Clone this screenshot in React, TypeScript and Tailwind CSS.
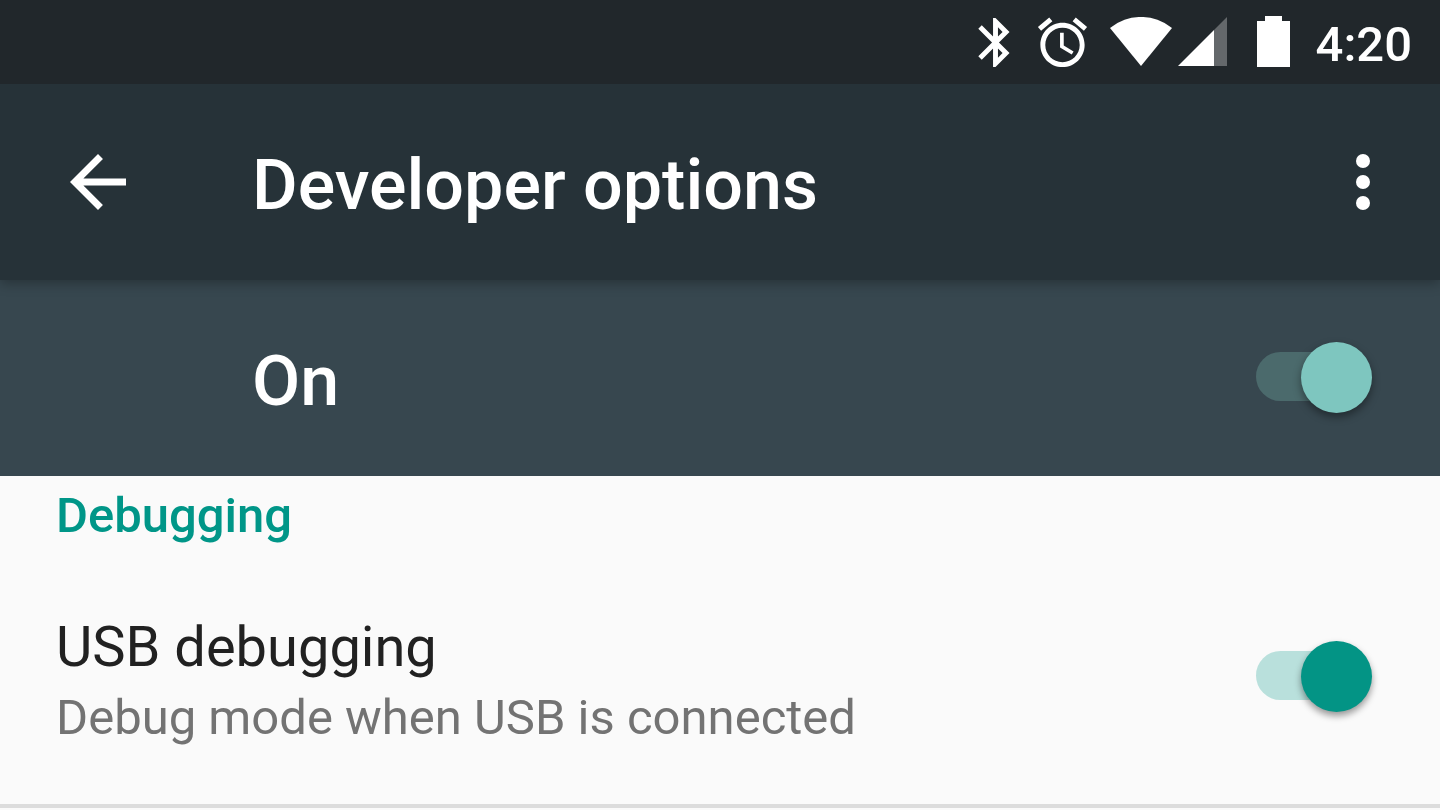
import { useId } from "react";
import clsx from "clsx";

type SwitchProps = {
  id: string;
  tone: "dark" | "light";
};

function BluetoothIcon() {
  return (
    <svg className="size-[59px]" viewBox="0 0 24 24" fill="currentColor" aria-hidden="true">
      <path d="M17.71 7.71L12 2h-1v7.59L6.41 5 5 6.41 10.59 12 5 17.59 6.41 19 11 14.41V22h1l5.71-5.71-4.3-4.29 4.3-4.29zM13 5.83l1.88 1.88L13 9.59V5.83zm1.88 10.46L13 18.17v-3.76l1.88 1.88z" />
    </svg>
  );
}

function AlarmIcon() {
  return (
    <svg className="size-[59px]" viewBox="0 0 24 24" fill="currentColor" aria-hidden="true">
      <path d="M22 5.72l-4.6-3.86-1.29 1.53 4.6 3.86L22 5.72zM7.88 3.39L6.6 1.86 2 5.71l1.29 1.53 4.59-3.85zM12.5 8H11v6l4.75 2.85.75-1.23-4-2.37V8zM12 4c-4.97 0-9 4.03-9 9s4.02 9 9 9c4.97 0 9-4.03 9-9s-4.03-9-9-9zm0 16c-3.87 0-7-3.13-7-7s3.13-7 7-7 7 3.13 7 7-3.13 7-7 7z" />
    </svg>
  );
}

function WifiIcon() {
  return (
    <svg className="h-[50px] w-[62px]" viewBox="0 0 62 50" fill="currentColor" aria-hidden="true">
      <path d="M0 11A49 49 0 0 1 62 11L31 49Z" />
    </svg>
  );
}

function SignalIcon() {
  return (
    <svg className="h-[50px] w-[49px]" viewBox="0 0 49 50" fill="currentColor" aria-hidden="true">
      <path d="M0 49L36 13V49Z" />
      <path d="M36 13L49 0V49H36Z" fillOpacity="0.3" />
    </svg>
  );
}

function BatteryIcon() {
  return (
    <svg className="h-[52px] w-[33px]" viewBox="0 0 33 52" fill="currentColor" aria-hidden="true">
      <path d="M8 0H25V5H33V51H0V5H8Z" />
    </svg>
  );
}

function Switch({ id, tone }: SwitchProps) {
  return (
    <input
      id={id}
      type="checkbox"
      role="switch"
      defaultChecked
      className={clsx(
        "relative h-[72px] w-[116px] shrink-0 cursor-pointer appearance-none",
        "before:absolute before:top-[10px] before:left-0 before:h-[49px] before:w-[100px] before:rounded-full before:content-['']",
        "after:absolute after:top-0 after:left-0 after:size-[71px] after:rounded-full after:content-[''] checked:after:left-[45px]",
        tone === "dark" &&
          "before:bg-[#566268] after:bg-[#b9b9b9] after:shadow-[0_4px_8px_rgba(0,0,0,0.4)] checked:before:bg-[#4b6a6c] checked:after:bg-[#7ec6bf]",
        tone === "light" &&
          "before:bg-[#b9b9b9] after:bg-[#f1f1f1] after:shadow-[0_4px_7px_rgba(0,0,0,0.4)] checked:before:bg-[#b9e0dc] checked:after:bg-[#039485]",
      )}
    />
  );
}

function StatusBar() {
  return (
    <div className="relative z-20 flex h-[84px] items-center justify-end bg-[#21272b] pr-7">
      <div className="mr-[18px] flex gap-2">
        <BluetoothIcon />
        <AlarmIcon />
      </div>
      <div className="mr-[30px] flex gap-1.5">
        <WifiIcon />
        <SignalIcon />
      </div>
      <BatteryIcon />
      <time className="pt-1.5 pl-[26px] text-[49px] leading-[64px] font-medium">4:20</time>
    </div>
  );
}

function AppBar() {
  return (
    <header className="relative z-10 flex h-[196px] items-center bg-[#263238] pr-[35px] pl-14 shadow-[0_3px_12px_rgba(0,0,0,0.3)]">
      <button type="button" aria-label="Back" className="mr-28 cursor-pointer">
        <svg className="size-[84px]" viewBox="0 0 24 24" fill="currentColor">
          <path d="M20 11H7.83l5.59-5.59L12 4l-8 8 8 8 1.41-1.41L7.83 13H20v-2z" />
        </svg>
      </button>
      <h1 className="flex-1 pt-1.5 text-[70px] leading-[84px] font-medium">Developer options</h1>
      <button type="button" aria-label="More options" className="cursor-pointer">
        <svg className="size-[84px]" viewBox="0 0 24 24" fill="currentColor">
          <circle cx="12" cy="6" r="2" />
          <circle cx="12" cy="12" r="2" />
          <circle cx="12" cy="18" r="2" />
        </svg>
      </button>
    </header>
  );
}

export default function App() {
  const masterId = useId();
  const usbId = useId();

  return (
    <div className="min-h-screen bg-[#fafafa] font-['Roboto',sans-serif]">
      <div className="text-white">
        <StatusBar />
        <AppBar />
        <div className="flex h-[196px] items-center justify-between bg-[#37474f] pr-[68px] pl-[252px]">
          <label htmlFor={masterId} className="pt-1.5 text-[70px] leading-[84px] font-medium">
            On
          </label>
          <Switch id={masterId} tone="dark" />
        </div>
      </div>

      <main>
        <h2 className="px-14 pt-2 pb-0.5 text-[49px] leading-[64px] font-medium text-[#009688]">
          Debugging
        </h2>
        <div className="flex min-h-[254px] items-center justify-between pr-[68px] pl-14">
          <label htmlFor={usbId} className="pt-1">
            <span className="block text-[56px] leading-[78px] text-[#212121]">USB debugging</span>
            <span className="block text-[49px] leading-[64px] text-[#737373]">
              Debug mode when USB is connected
            </span>
          </label>
          <Switch id={usbId} tone="light" />
        </div>
        <hr className="border-t-4 border-[#dcdcdc]" />
      </main>
    </div>
  );
}
